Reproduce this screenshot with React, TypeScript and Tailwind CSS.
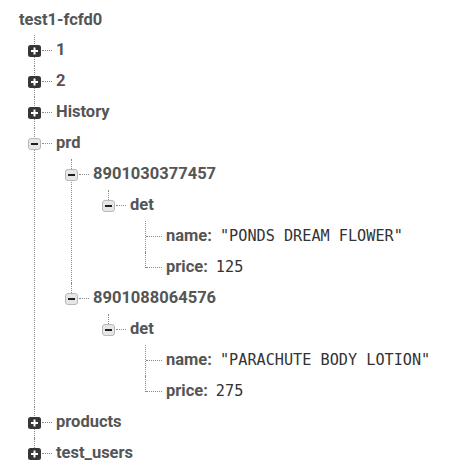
import React from "react";

type Node = {
  label: string;
  value?: string;
  children?: Node[];
  collapsed?: boolean;
};

const tree: Node[] = [
  { label: "1", collapsed: true },
  { label: "2", collapsed: true },
  { label: "History", collapsed: true },
  {
    label: "prd",
    children: [
      {
        label: "8901030377457",
        children: [
          {
            label: "det",
            children: [
              { label: "name", value: '"PONDS DREAM FLOWER"' },
              { label: "price", value: "125" },
            ],
          },
        ],
      },
      {
        label: "8901088064576",
        children: [
          {
            label: "det",
            children: [
              { label: "name", value: '"PARACHUTE BODY LOTION"' },
              { label: "price", value: "275" },
            ],
          },
        ],
      },
    ],
  },
  { label: "products", collapsed: true },
  { label: "test_users", collapsed: true },
];

const labelFont = { fontFamily: "Roboto, 'Liberation Sans', sans-serif" };
const monoFont = { fontFamily: "'DejaVu Sans Mono', 'Liberation Mono', monospace" };

function PlusBox() {
  return (
    <svg width="13" height="12" viewBox="0 0 13 12" className="relative z-10 shrink-0 block">
      <rect x="0" y="0" width="13" height="12" rx="2.5" fill="#363636" />
      <path d="M3 6h7M6.5 2.5v7" stroke="#ffffff" strokeWidth="2" />
    </svg>
  );
}

function MinusBox() {
  return (
    <svg width="13" height="12" viewBox="0 0 13 12" className="relative z-10 shrink-0 block">
      <rect x="0.5" y="0.5" width="12" height="11" rx="2.5" fill="#e6e6e6" stroke="#b8b8b8" />
      <path d="M3 6h7" stroke="#1e1e1e" strokeWidth="2" />
    </svg>
  );
}

function Item({ node, last }: { node: Node; last: boolean }) {
  const isLeaf = node.value !== undefined;
  return (
    <div className="relative">
      {last ? (
        <span className="absolute left-[6px] top-0 h-[16px] w-0 border-l border-dotted border-[#8a8a8a]" />
      ) : (
        <span className="absolute left-[6px] top-0 bottom-0 w-0 border-l border-dotted border-[#8a8a8a]" />
      )}
      {isLeaf ? (
        <div className="flex h-[31px] items-center pl-[7px]">
          <span className="w-[16px] border-t border-dotted border-[#8a8a8a]" />
          <span className="ml-[4px] text-[16.5px] font-bold text-[#555555] whitespace-nowrap" style={labelFont}>
            {node.label}:
          </span>
          <span className="ml-[8px] text-[15.2px] text-[#333333] whitespace-pre" style={monoFont}>
            {node.value}
          </span>
        </div>
      ) : (
        <div className="flex h-[31px] items-center">
          {node.collapsed ? <PlusBox /> : <MinusBox />}
          <span className="ml-[1px] w-[10px] border-t border-dotted border-[#8a8a8a]" />
          <span className="ml-[4px] text-[16.5px] font-bold text-[#555555] whitespace-nowrap" style={labelFont}>
            {node.label}
          </span>
        </div>
      )}
      {node.children && !node.collapsed && (
        <div className="ml-[37px]">
          <Group nodes={node.children} />
        </div>
      )}
    </div>
  );
}

function Group({ nodes }: { nodes: Node[] }) {
  return (
    <div className="flex flex-col">
      {nodes.map((n, i) => (
        <Item key={i} node={n} last={i === nodes.length - 1} />
      ))}
    </div>
  );
}

export default function App() {
  return (
    <div className="w-[474px] h-[471px] bg-white overflow-hidden">
      <div className="pt-[5px] pl-[19px] h-[35px] flex items-center">
        <span className="text-[16.5px] font-bold text-[#555555]" style={labelFont}>
          test1-fcfd0
        </span>
      </div>
      <div className="pl-[28px]">
        <Group nodes={tree} />
      </div>
    </div>
  );
}
